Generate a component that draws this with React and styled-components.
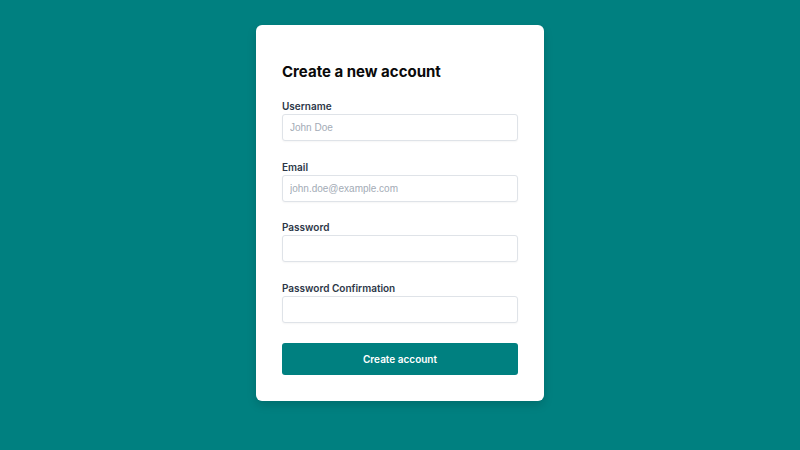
import React from "react";
import styled, { createGlobalStyle } from "styled-components";

const GlobalStyle = createGlobalStyle`
  html, body {
    margin: 0;
    padding: 0;
    background: #008080;
  }
  body {
    font-family: Inter, "Liberation Sans", sans-serif;
  }
`;

const fields = [
  { label: "Username", type: "text", placeholder: "John Doe" },
  { label: "Email", type: "email", placeholder: "john.doe@example.com" },
  { label: "Password", type: "password", placeholder: "" },
  { label: "Password Confirmation", type: "password", placeholder: "" },
];

const App = () => {
  return (
    <Page>
      <GlobalStyle />
      <Card>
        <Title>Create a new account</Title>
        <Form onSubmit={(e) => e.preventDefault()}>
          {fields.map((f) => (
            <Field key={f.label}>
              <Label>{f.label}</Label>
              <Input type={f.type} placeholder={f.placeholder} />
            </Field>
          ))}
          <SubmitButton type="submit">Create account</SubmitButton>
        </Form>
      </Card>
    </Page>
  );
};

const Page = styled.div`
  min-height: 450px;
  display: flex;
  justify-content: center;
  align-items: flex-start;
  padding-top: 25px;
  box-sizing: border-box;
`;
const Card = styled.div`
  width: 288px;
  box-sizing: border-box;
  padding: 37px 26px 26px;
  background: #ffffff;
  border-radius: 6px;
  box-shadow: 0 4px 10px rgba(0, 0, 0, 0.15);
`;
const Title = styled.h1`
  margin: 0 0 16px;
  font-size: 15px;
  line-height: 20px;
  font-weight: 700;
  color: #0a0a0a;
`;
const Form = styled.form`
  display: flex;
  flex-direction: column;
`;
const Field = styled.div`
  display: flex;
  flex-direction: column;
  margin-bottom: 17.6px;
  &:nth-last-of-type(1) {
    margin-bottom: 20.5px;
  }
`;
const Label = styled.label`
  font-size: 10px;
  line-height: 16px;
  font-weight: 600;
  color: #2d3748;
`;
const Input = styled.input`
  height: 27px;
  box-sizing: border-box;
  padding: 0 7px;
  border: 1px solid #dfe3e8;
  border-radius: 3px;
  box-shadow: 0 1px 2px rgba(0, 0, 0, 0.04);
  font-family: "Liberation Sans", Arial, sans-serif;
  font-size: 10px;
  color: #2d3748;
  outline: none;
  &::placeholder {
    color: #a3abb6;
  }
`;
const SubmitButton = styled.button`
  height: 32px;
  border: none;
  border-radius: 3px;
  background: #008080;
  color: #ffffff;
  font-family: Inter, "Liberation Sans", sans-serif;
  font-size: 10px;
  font-weight: 600;
  cursor: pointer;
`;

export default App;
